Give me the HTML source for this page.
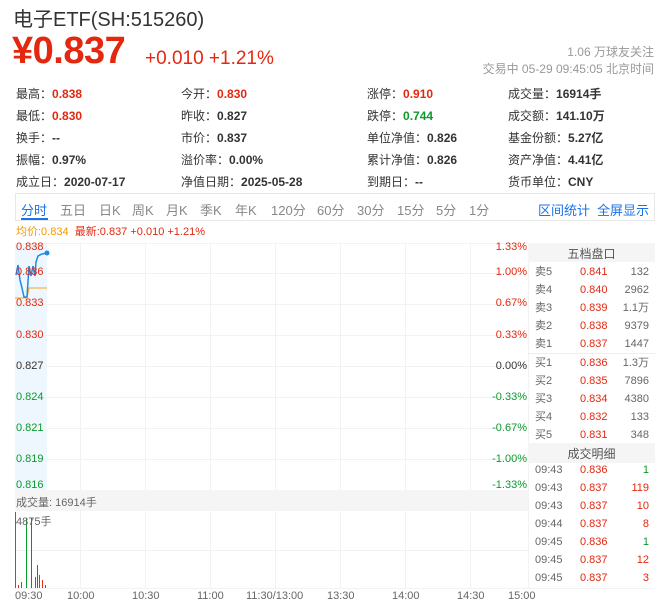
<!DOCTYPE html>
<html><head><meta charset="utf-8"><style>
*{margin:0;padding:0;box-sizing:border-box}
body{width:670px;height:615px;background:#fff;font-family:"Liberation Sans","Noto Sans CJK SC",sans-serif;position:relative;overflow:hidden;color:#333}
.a{position:absolute;white-space:nowrap}
.r{color:#e3280f}.g{color:#0b9a2c}
.q{font-size:12px}
.q b{font-weight:bold;color:#333}
.q b.r{color:#e3280f}.q b.g{color:#0b9a2c}
.t{position:absolute;top:200px;font-size:13px;color:#888;white-space:nowrap}
.sm{font-size:11px}
</style></head><body>
<div class="a" style="left:13px;top:3px;font-size:20px;color:#333">电子ETF(SH:515260)</div>
<div class="a r" style="left:12px;top:30px;font-size:38px;font-weight:bold;letter-spacing:-0.5px">¥0.837</div>
<div class="a r" style="left:145px;top:48px;font-size:19px">+0.010 +1.21%</div>
<div class="a" style="right:16px;top:43px;font-size:12px;color:#999">1.06 万球友关注</div>
<div class="a" style="right:16px;top:60px;font-size:12px;color:#999">交易中 05-29 09:45:05 北京时间</div>

<div class="a q" style="left:16px;top:85px">最高：<b class="r">0.838</b></div>
<div class="a q" style="left:16px;top:107px">最低：<b class="r">0.830</b></div>
<div class="a q" style="left:16px;top:129px">换手：<b>--</b></div>
<div class="a q" style="left:16px;top:151px">振幅：<b>0.97%</b></div>
<div class="a q" style="left:16px;top:173px">成立日：<b>2020-07-17</b></div>
<div class="a q" style="left:181px;top:85px">今开：<b class="r">0.830</b></div>
<div class="a q" style="left:181px;top:107px">昨收：<b>0.827</b></div>
<div class="a q" style="left:181px;top:129px">市价：<b>0.837</b></div>
<div class="a q" style="left:181px;top:151px">溢价率：<b>0.00%</b></div>
<div class="a q" style="left:181px;top:173px">净值日期：<b>2025-05-28</b></div>
<div class="a q" style="left:367px;top:85px">涨停：<b class="r">0.910</b></div>
<div class="a q" style="left:367px;top:107px">跌停：<b class="g">0.744</b></div>
<div class="a q" style="left:367px;top:129px">单位净值：<b>0.826</b></div>
<div class="a q" style="left:367px;top:151px">累计净值：<b>0.826</b></div>
<div class="a q" style="left:367px;top:173px">到期日：<b>--</b></div>
<div class="a q" style="left:508px;top:85px">成交量：<b>16914手</b></div>
<div class="a q" style="left:508px;top:107px">成交额：<b>141.10万</b></div>
<div class="a q" style="left:508px;top:129px">基金份额：<b>5.27亿</b></div>
<div class="a q" style="left:508px;top:151px">资产净值：<b>4.41亿</b></div>
<div class="a q" style="left:508px;top:173px">货币单位：<b>CNY</b></div>

<div class="a" style="left:15px;top:193px;width:640px;height:28px;border:1px solid #e8e8e8"></div>
<span class="t" style="left:21px;color:#1a73e8">分时</span>
<span class="t" style="left:60px">五日</span>
<span class="t" style="left:99px">日K</span>
<span class="t" style="left:132px">周K</span>
<span class="t" style="left:166px">月K</span>
<span class="t" style="left:200px">季K</span>
<span class="t" style="left:235px">年K</span>
<span class="t" style="left:271px">120分</span>
<span class="t" style="left:317px">60分</span>
<span class="t" style="left:357px">30分</span>
<span class="t" style="left:397px">15分</span>
<span class="t" style="left:436px">5分</span>
<span class="t" style="left:469px">1分</span>
<div class="a" style="left:21px;top:218px;width:27px;height:2px;background:#1a73e8"></div>
<span class="t" style="left:538px;color:#1a73e8">区间统计</span>
<span class="t" style="left:597px;color:#1a73e8">全屏显示</span>
<div class="a sm" style="left:16px;top:223px"><span style="color:#f39800">均价:0.834</span>&nbsp; <span class="r">最新:0.837 +0.010 +1.21%</span></div>

<svg class="a" style="left:0;top:0" width="670" height="615">
<rect x="15" y="243" width="32" height="247" fill="#eef6fe"/>
<g stroke="#f2f2f2" stroke-width="1">
<line x1="15" y1="243.5" x2="528" y2="243.5"/>
<line x1="15" y1="273.5" x2="528" y2="273.5"/>
<line x1="15" y1="304.5" x2="528" y2="304.5"/>
<line x1="15" y1="335.5" x2="528" y2="335.5"/>
<line x1="15" y1="366.5" x2="528" y2="366.5"/>
<line x1="15" y1="397.5" x2="528" y2="397.5"/>
<line x1="15" y1="428.5" x2="528" y2="428.5"/>
<line x1="15" y1="459.5" x2="528" y2="459.5"/>
<line x1="15" y1="490.5" x2="528" y2="490.5"/>
<line x1="15" y1="550.5" x2="528" y2="550.5"/>
<line x1="15" y1="588.5" x2="655" y2="588.5"/>
<line x1="80.5" y1="243" x2="80.5" y2="588"/>
<line x1="145.5" y1="243" x2="145.5" y2="588"/>
<line x1="210.5" y1="243" x2="210.5" y2="588"/>
<line x1="275.5" y1="243" x2="275.5" y2="588"/>
<line x1="340.5" y1="243" x2="340.5" y2="588"/>
<line x1="405.5" y1="243" x2="405.5" y2="588"/>
<line x1="470.5" y1="243" x2="470.5" y2="588"/>
<line x1="528.5" y1="243" x2="528.5" y2="588"/>
</g>
<rect x="15" y="490" width="513" height="21" fill="#f5f5f5"/>
<rect x="528" y="243" width="127" height="19" fill="#f5f5f5"/>
<rect x="528" y="443" width="127" height="20" fill="#f5f5f5"/>
<polyline fill="none" stroke="#f5a623" stroke-width="1" points="15,298 27,298 29,288 47,288"/>
<polyline fill="none" stroke="#1e88e5" stroke-width="1.5" points="16,275 18,265 20,280 22,288 24,297 27,297 29,266 31,276 33,266 35,276 36,262 38,256 42,254 47,253"/>
<circle cx="47" cy="253" r="2.5" fill="#1e88e5"/>
<g stroke-width="1">
<line x1="15.5" y1="512" x2="15.5" y2="588" stroke="#0b9a2c"/>
<line x1="18.5" y1="585" x2="18.5" y2="588" stroke="#e3280f"/>
<line x1="21.5" y1="582" x2="21.5" y2="588" stroke="#0b9a2c"/>
<line x1="26.5" y1="518" x2="26.5" y2="588" stroke="#0b9a2c"/>
<line x1="31.5" y1="518" x2="31.5" y2="588" stroke="#e3280f"/>
<line x1="35.5" y1="577" x2="35.5" y2="588" stroke="#0b9a2c"/>
<line x1="37.5" y1="565" x2="37.5" y2="588" stroke="#e3280f"/>
<line x1="39.5" y1="575" x2="39.5" y2="588" stroke="#0b9a2c"/>
<line x1="42.5" y1="580" x2="42.5" y2="588" stroke="#e3280f"/>
<line x1="45.5" y1="585" x2="45.5" y2="588" stroke="#e3280f"/>
</g>
</svg>

<div class="a sm r" style="left:16px;top:241px">0.838</div>
<div class="a sm r" style="left:16px;top:266px">0.836</div>
<div class="a sm r" style="left:16px;top:297px">0.833</div>
<div class="a sm r" style="left:16px;top:329px">0.830</div>
<div class="a sm" style="left:16px;top:360px;color:#333">0.827</div>
<div class="a sm g" style="left:16px;top:391px">0.824</div>
<div class="a sm g" style="left:16px;top:422px">0.821</div>
<div class="a sm g" style="left:16px;top:453px">0.819</div>
<div class="a sm g" style="left:16px;top:479px">0.816</div>
<div class="a sm r" style="right:143px;top:241px">1.33%</div>
<div class="a sm r" style="right:143px;top:266px">1.00%</div>
<div class="a sm r" style="right:143px;top:297px">0.67%</div>
<div class="a sm r" style="right:143px;top:329px">0.33%</div>
<div class="a sm" style="right:143px;top:360px;color:#333">0.00%</div>
<div class="a sm g" style="right:143px;top:391px">-0.33%</div>
<div class="a sm g" style="right:143px;top:422px">-0.67%</div>
<div class="a sm g" style="right:143px;top:453px">-1.00%</div>
<div class="a sm g" style="right:143px;top:479px">-1.33%</div>
<div class="a sm" style="left:16px;top:494px;color:#666">成交量: 16914手</div>
<div class="a sm" style="left:16px;top:513px;color:#666">4875手</div>

<div class="a sm" style="top:590px;left:15px;color:#666">09:30</div>
<div class="a sm" style="top:590px;left:67px;color:#666">10:00</div>
<div class="a sm" style="top:590px;left:132px;color:#666">10:30</div>
<div class="a sm" style="top:590px;left:197px;color:#666">11:00</div>
<div class="a sm" style="top:590px;left:246px;color:#666">11:30/13:00</div>
<div class="a sm" style="top:590px;left:327px;color:#666">13:30</div>
<div class="a sm" style="top:590px;left:392px;color:#666">14:00</div>
<div class="a sm" style="top:590px;left:457px;color:#666">14:30</div>
<div class="a sm" style="top:590px;left:508px;color:#666">15:00</div>

<div class="a" style="left:528px;top:245px;width:127px;text-align:center;font-size:12px;color:#555">五档盘口</div>
<div class="a" style="left:528px;top:445px;width:127px;text-align:center;font-size:12px;color:#555">成交明细</div>
<div class="a" style="left:535px;top:263px;width:114px;font-size:11px;line-height:18px">
<div style="display:flex;justify-content:space-between;height:18px"><span style="color:#666;width:45px">卖5</span><span class="r" style="width:40px">0.841</span><span style="color:#666;width:29px;text-align:right">132</span></div>
<div style="display:flex;justify-content:space-between;height:18px"><span style="color:#666;width:45px">卖4</span><span class="r" style="width:40px">0.840</span><span style="color:#666;width:29px;text-align:right">2962</span></div>
<div style="display:flex;justify-content:space-between;height:18px"><span style="color:#666;width:45px">卖3</span><span class="r" style="width:40px">0.839</span><span style="color:#666;width:29px;text-align:right">1.1万</span></div>
<div style="display:flex;justify-content:space-between;height:18px"><span style="color:#666;width:45px">卖2</span><span class="r" style="width:40px">0.838</span><span style="color:#666;width:29px;text-align:right">9379</span></div>
<div style="display:flex;justify-content:space-between;height:18px"><span style="color:#666;width:45px">卖1</span><span class="r" style="width:40px">0.837</span><span style="color:#666;width:29px;text-align:right">1447</span></div>
<div style="height:1px;background:#eee;margin:0 -7px 0 -7px"></div>
<div style="display:flex;justify-content:space-between;height:18px"><span style="color:#666;width:45px">买1</span><span class="r" style="width:40px">0.836</span><span style="color:#666;width:29px;text-align:right">1.3万</span></div>
<div style="display:flex;justify-content:space-between;height:18px"><span style="color:#666;width:45px">买2</span><span class="r" style="width:40px">0.835</span><span style="color:#666;width:29px;text-align:right">7896</span></div>
<div style="display:flex;justify-content:space-between;height:18px"><span style="color:#666;width:45px">买3</span><span class="r" style="width:40px">0.834</span><span style="color:#666;width:29px;text-align:right">4380</span></div>
<div style="display:flex;justify-content:space-between;height:18px"><span style="color:#666;width:45px">买4</span><span class="r" style="width:40px">0.832</span><span style="color:#666;width:29px;text-align:right">133</span></div>
<div style="display:flex;justify-content:space-between;height:18px"><span style="color:#666;width:45px">买5</span><span class="r" style="width:40px">0.831</span><span style="color:#666;width:29px;text-align:right">348</span></div>
</div>
<div class="a" style="left:535px;top:461px;width:114px;font-size:11px;line-height:18px">
<div style="display:flex;justify-content:space-between"><span style="color:#666;width:45px">09:43</span><span class="r" style="width:40px">0.836</span><span class="g" style="width:29px;text-align:right">1</span></div>
<div style="display:flex;justify-content:space-between"><span style="color:#666;width:45px">09:43</span><span class="r" style="width:40px">0.837</span><span class="r" style="width:29px;text-align:right">119</span></div>
<div style="display:flex;justify-content:space-between"><span style="color:#666;width:45px">09:43</span><span class="r" style="width:40px">0.837</span><span class="r" style="width:29px;text-align:right">10</span></div>
<div style="display:flex;justify-content:space-between"><span style="color:#666;width:45px">09:44</span><span class="r" style="width:40px">0.837</span><span class="r" style="width:29px;text-align:right">8</span></div>
<div style="display:flex;justify-content:space-between"><span style="color:#666;width:45px">09:45</span><span class="r" style="width:40px">0.836</span><span class="g" style="width:29px;text-align:right">1</span></div>
<div style="display:flex;justify-content:space-between"><span style="color:#666;width:45px">09:45</span><span class="r" style="width:40px">0.837</span><span class="r" style="width:29px;text-align:right">12</span></div>
<div style="display:flex;justify-content:space-between"><span style="color:#666;width:45px">09:45</span><span class="r" style="width:40px">0.837</span><span class="r" style="width:29px;text-align:right">3</span></div>
</div>
</body></html>
